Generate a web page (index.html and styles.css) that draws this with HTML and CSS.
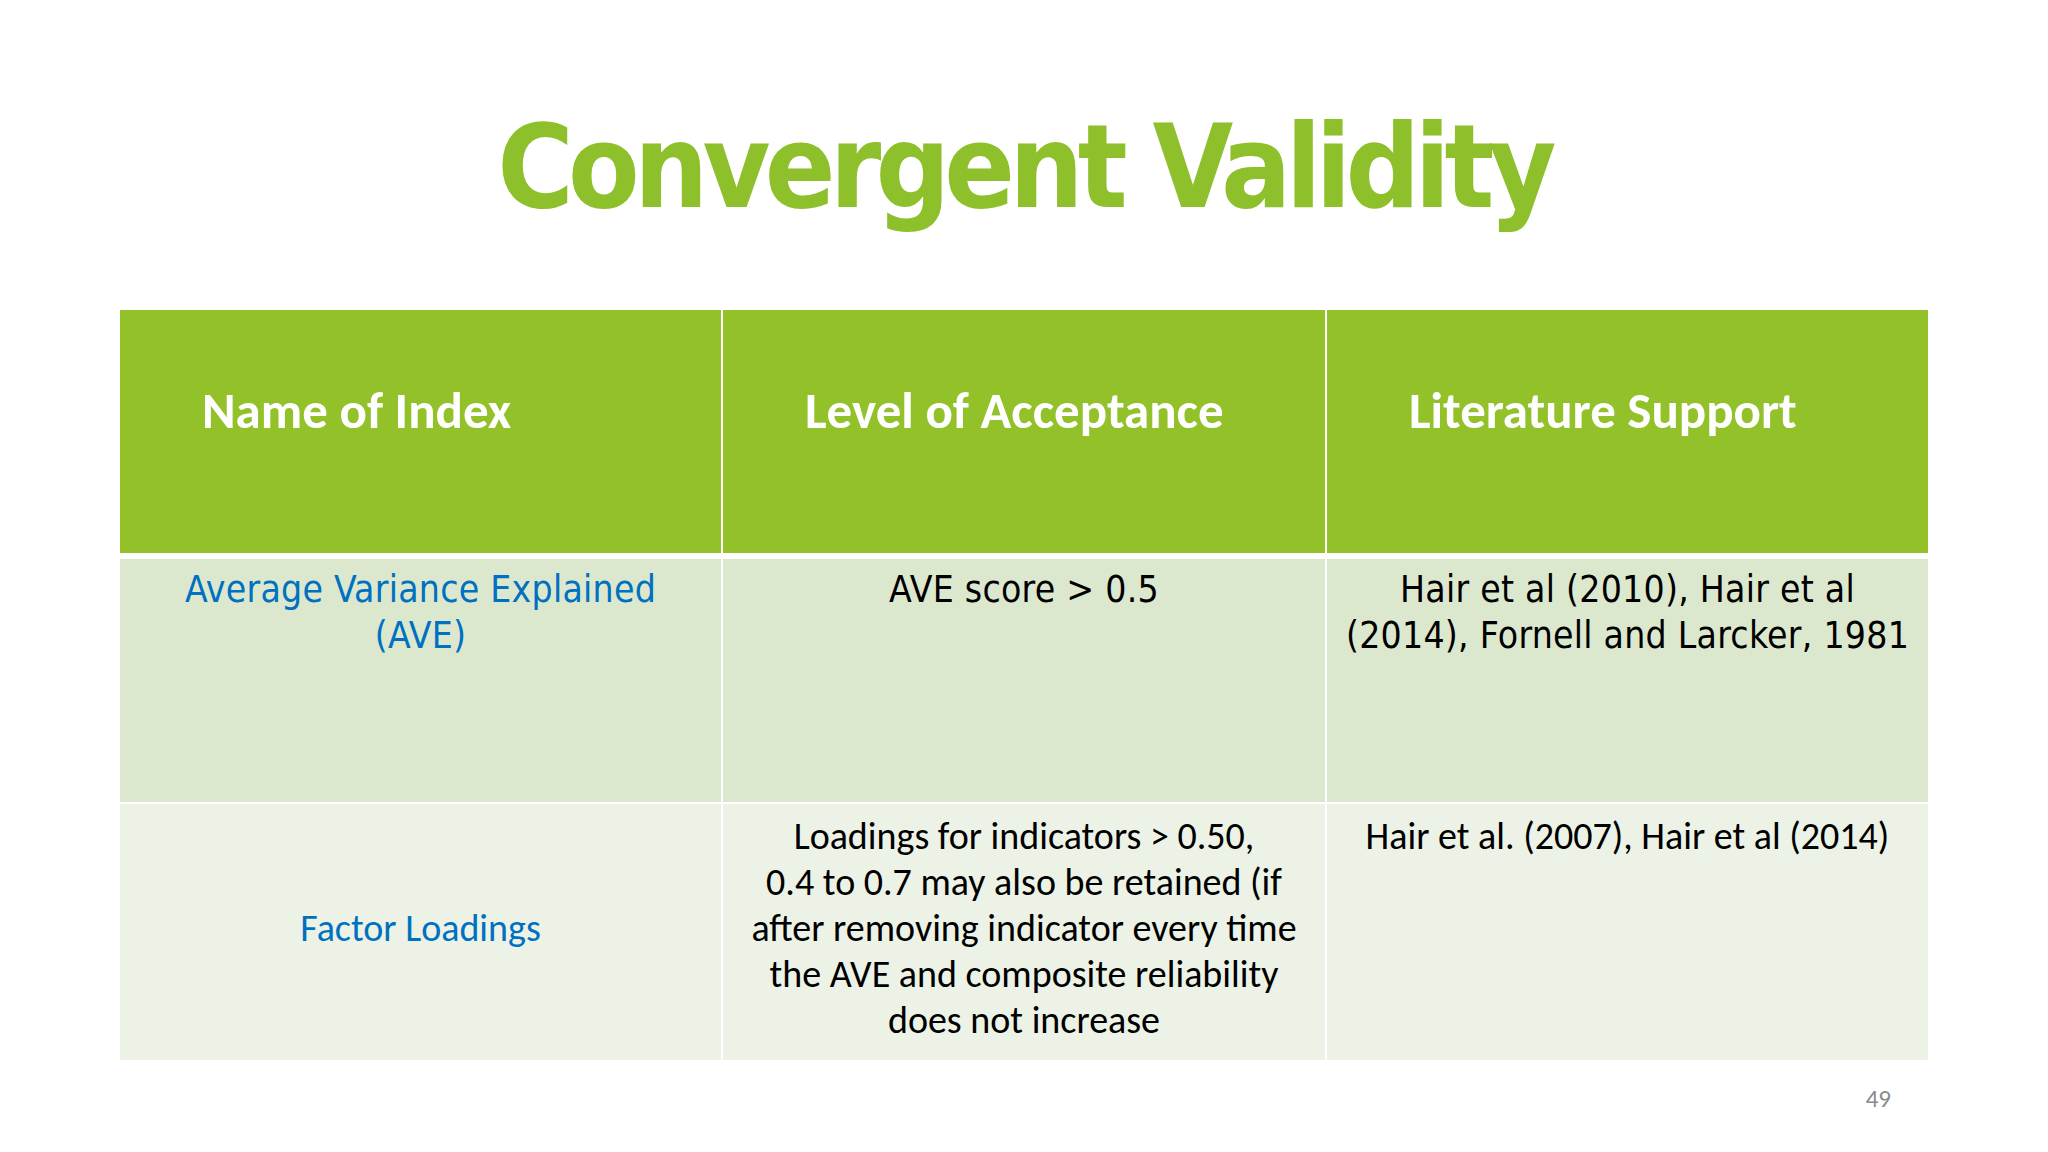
FILE: index.html
```html
<!DOCTYPE html>
<html lang="en">
<head>
<meta charset="utf-8">
<title>Convergent Validity</title>
<link rel="stylesheet" href="styles.css">
</head>
<body>
<main class="slide">
  <h1 class="title">Convergent Validity</h1>
  <section class="table">
    <div class="cell head">Name of Index</div>
    <div class="cell head">Level of Acceptance</div>
    <div class="cell head">Literature Support</div>

    <div class="cell r1 tw blue">Average Variance Explained<br>(AVE)</div>
    <div class="cell r1 tw">AVE score &gt; 0.5</div>
    <div class="cell r1 tw">Hair et al (2010), Hair et al<br>(2014), Fornell and Larcker, 1981</div>

    <div class="cell r2 cal blue mid">Factor Loadings</div>
    <div class="cell r2 cal">Loadings for indicators &gt; 0.50,<br>0.4 to 0.7 may also be retained (if<br>after removing indicator every time<br>the AVE and composite reliability<br>does not increase</div>
    <div class="cell r2 cal">Hair et al. (2007), Hair et al (2014)</div>
  </section>
  <footer class="pageno">49</footer>
</main>
</body>
</html>
```
FILE: styles.css
```css
html, body {
  margin: 0;
  padding: 0;
  background: #ffffff;
}

.slide {
  width: 2048px;
  height: 1152px;
  display: flex;
  flex-direction: column;
  align-items: flex-start;
  overflow: hidden;
}

.title {
  align-self: stretch;
  margin: 109px 0 0 0;
  font-family: "DejaVu Sans Condensed", "DejaVu Sans", sans-serif;
  font-stretch: condensed;
  font-weight: bold;
  font-size: 116px;
  line-height: 116px;
  letter-spacing: -5.8px;
  text-align: center;
  color: #8dc02b;
}

.table {
  margin: 85px 0 0 120px;
  width: 1808px;
  display: grid;
  grid-template-columns: 601px 602px 601px;
  grid-template-rows: 247px 243px 256px;
  column-gap: 2px;
  row-gap: 2px;
}

.cell {
  box-sizing: border-box;
  color: #000;
}

.head {
  background: #92c12a;
  border-bottom: 4px solid #ffffff;
  color: #ffffff;
  font-family: Carlito, Lato, "Open Sans", sans-serif;
  font-weight: bold;
  font-size: 51px;
  line-height: 60px;
  padding: 71px 0 0 82px;
}

.r1 {
  background: #dce8ce;
  text-align: center;
  padding-top: 8px;
}

.r2 {
  background: #edf2e7;
  text-align: center;
  padding-top: 9px;
}

.tw {
  font-family: "DejaVu Sans Condensed", "DejaVu Sans", sans-serif;
  font-stretch: condensed;
  font-size: 37px;
  line-height: 46px;
  letter-spacing: 0.25px;
}

.cal {
  font-family: Carlito, Lato, "Open Sans", sans-serif;
  font-size: 38px;
  line-height: 46px;
}

.blue {
  color: #0070c0;
}

.mid {
  display: flex;
  align-items: center;
  justify-content: center;
  padding: 0 0 9px 0;
}

.pageno {
  align-self: flex-end;
  margin: 24px 157px 0 0;
  font-family: Carlito, Lato, "Open Sans", sans-serif;
  font-size: 25px;
  line-height: 30px;
  color: #8b8b8b;
}
```
